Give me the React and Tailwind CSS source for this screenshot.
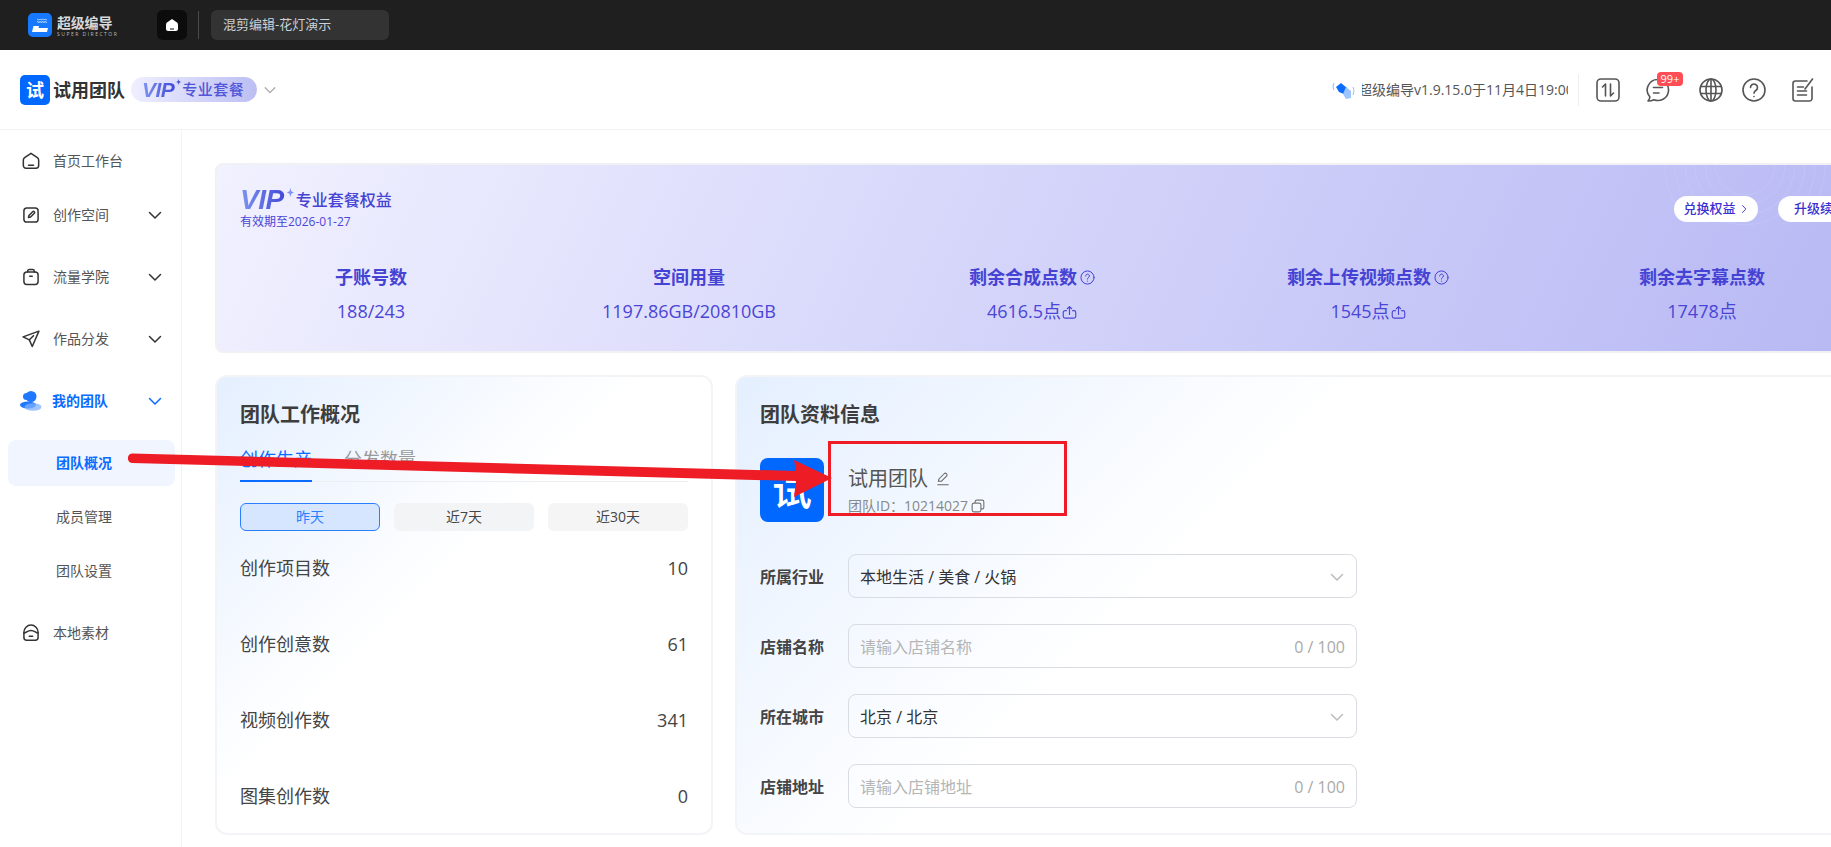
import React from "react";

const S = ({ size = 20, sw = 1.8, children, className = "" }) => (
  <svg width={size} height={size} viewBox="0 0 24 24" fill="none" stroke="currentColor" strokeWidth={sw} strokeLinecap="round" strokeLinejoin="round" className={className}>
    {children}
  </svg>
);

const Chevron = ({ className = "", size = 16 }) => (
  <svg width={size} height={size} viewBox="0 0 16 16" fill="none" stroke="currentColor" strokeWidth="1.5" strokeLinecap="round" strokeLinejoin="round" className={className}>
    <path d="M2.5 5.5 8 11l5.5-5.5" />
  </svg>
);

const HomeIcon = () => (
  <S size={20}>
    <path d="M12 2.8 19.6 8c1 .7 1.6 1.8 1.6 3v6.5a3.2 3.2 0 0 1-3.2 3.2H6a3.2 3.2 0 0 1-3.2-3.2V11c0-1.2.6-2.3 1.6-3Z" />
    <path d="M9 17h6" />
  </S>
);
const EditIcon = () => (
  <S size={20}>
    <rect x="3.5" y="3.5" width="17" height="17" rx="3.5" />
    <path d="m9 15 .5-2.5 4.5-4.5a1.4 1.4 0 0 1 2 2l-4.5 4.5Z" />
  </S>
);
const BagIcon = () => (
  <S size={20}>
    <rect x="3.5" y="6" width="17" height="15" rx="3.5" />
    <path d="M8 6V5a2 2 0 0 1 2-2h4a2 2 0 0 1 2 2v1" />
    <path d="M10.5 11h3" />
  </S>
);
const SendIcon = () => (
  <S size={20}>
    <path d="M21.5 2.5 2.5 9.5l7.5 3.5 3.5 8Z" />
    <path d="m10 13 5-5" />
  </S>
);
const TeamIcon = () => (
  <svg width="22" height="22" viewBox="0 0 22 22">
    <circle cx="11" cy="6.5" r="5.5" fill="#1f78ff" />
    <circle cx="6.5" cy="6.5" r="3.5" fill="#1f78ff" />
    <ellipse cx="8" cy="15" rx="8" ry="3.4" fill="#1f78ff" />
    <ellipse cx="13" cy="17" rx="8.5" ry="3.8" fill="#7fb0ff" opacity="0.75" />
  </svg>
);
const LocalIcon = () => (
  <S size={20}>
    <path d="M3.5 11a8.5 8.5 0 0 1 17 0v6.5a3.2 3.2 0 0 1-3.2 3.2H6.700a3.2 3.2 0 0 1-3.2-3.2Z" />
    <path d="M3.5 12c3 0 4-3 8.500-3s5.500 3 8.500 3" />
    <path d="M10 16h4" />
  </S>
);

const Row = ({ icon, label, chevron, active, className = "" }) => (
  <div className={`flex h-[46px] items-center pl-[21px] pr-[18px] ${className}`}>
    <span className={`flex w-[32px] shrink-0 ${active ? "" : "text-[#333]"}`}>{icon}</span>
    <span className={`flex-1 text-sm ${active ? "font-bold text-[#0a6cff]" : "text-[#555]"}`}>{label}</span>
    {chevron && <Chevron className={active ? "text-[#0a6cff]" : "text-[#333]"} />}
  </div>
);

const Sub = ({ label, active, className = "" }) => (
  <div className={`mx-2 flex h-[46px] w-[167px] items-center rounded-lg pl-[48px] text-sm ${active ? "bg-[#f0f5ff] font-bold text-[#0a6cff]" : "text-[#555]"} ${className}`}>
    {label}
  </div>
);

const Vip = ({ big }) => (
  <span className="flex items-start">
    <span className={`bg-[linear-gradient(90deg,#7f95f0,#3f46d8)] bg-clip-text pr-[2px] font-['Liberation_Sans',sans-serif] font-bold italic tracking-[-0.5px] text-transparent ${big ? "text-[28px] leading-[24px]" : "text-[21px] leading-[22px]"}`}>
      VIP
    </span>
    <svg width={big ? 9 : 6} height={big ? 9 : 6} viewBox="0 0 10 10" className="-ml-[1px]">
      <path d="M6 0 7 3.500 10 5 7 6.500 6 10 5 6.500 2 5 5 3.500Z" fill={big ? "#7f95f0" : "#4f56d8"} />
    </svg>
  </span>
);

const Stat = ({ label, help, value, upload, className = "" }) => (
  <div className={`flex shrink-0 flex-col items-center text-[#4a45d6] ${className}`}>
    <div className="flex h-[24px] items-center text-lg font-bold leading-[24px] text-[#4543d4]">
      {label}
      {help && (
        <svg width="15" height="15" viewBox="0 0 24 24" fill="none" stroke="currentColor" strokeWidth="1.6" strokeLinecap="round" className="ml-[3px]">
          <circle cx="12" cy="12" r="10.5" />
          <path d="M9 9.500a3 3 0 1 1 4.500 2.600c-1 .6-1.500 1.200-1.500 2.400" />
          <path d="M12 17.800v.1" />
        </svg>
      )}
    </div>
    <div className="mt-[10px] flex h-[24px] items-center text-lg leading-[24px]">
      {value}
      {upload && (
        <svg width="15" height="15" viewBox="0 0 24 24" fill="none" stroke="currentColor" strokeWidth="1.8" strokeLinecap="round" strokeLinejoin="round" className="ml-[1px] mt-[2px]">
          <path d="M7 9H5a3 3 0 0 0-3 3v6a3 3 0 0 0 3 3h14a3 3 0 0 0 3-3v-6a3 3 0 0 0-3-3h-2" />
          <path d="M12 15V3M8.500 6 12 2.500 15.500 6" />
        </svg>
      )}
    </div>
  </div>
);

const Metric = ({ label, value }) => (
  <div className="flex h-[24px] items-center justify-between text-lg text-[#444]">
    <span>{label}</span>
    <span>{value}</span>
  </div>
);

const Field = ({ label, children }) => (
  <div className="flex items-center">
    <span className="w-[88px] shrink-0 pt-[2px] text-base font-bold text-[#444]">{label}</span>
    <div className="flex h-[44px] w-[509px] items-center justify-between rounded-lg border border-[#d9dce1] px-[11px] pt-[2px] text-base">
      {children}
    </div>
  </div>
);

export default function App() {
  return (
    <div className="relative h-[847px] w-[1831px] overflow-hidden bg-white font-['Open_Sans','Noto_Sans_CJK_SC',sans-serif]">
      {/* window bar */}
      <div className="flex h-[50px] items-center bg-[#1f1f1f] pl-[28px]">
        <div className="flex h-[24px] w-[24px] items-center justify-center rounded-[5px] bg-[#1677ff]">
          <svg width="20" height="20" viewBox="0 0 20 20" fill="#fff">
            <path d="M2 17 3.500 11H9L8.500 13H18L17 17Z" />
            <path d="M7 7c1-1 1.500 1 2.500 0s1.500 1 2.500 0 1.500 1 2.500 0 1.500 1 2.500 0" fill="none" stroke="#fff" strokeWidth="1" />
            <path d="M7 4.500c1-1 1.500 1 2.500 0s1.500 1 2.500 0 1.500 1 2.500 0 1.500 1 2.500 0" fill="none" stroke="#fff" strokeWidth="1" opacity="0.7" />
          </svg>
        </div>
        <div className="ml-[5px] flex w-[100px] flex-col">
          <span className="text-sm font-bold leading-[17px] tracking-[-0.2px] text-[#d8d8d8]">超级编导</span>
          <span className="text-[5px] leading-[6px] tracking-[1.5px] text-[#bbb]">SUPER DIRECTOR</span>
        </div>
        <div className="flex h-[30px] w-[30px] items-center justify-center rounded-md bg-[#0c0c0c]">
          <svg width="14" height="14" viewBox="0 0 14 14" fill="#fff">
            <path d="M7 1 12 4.500c.7.500 1 1.300 1 2.200V11a2 2 0 0 1-2 2H3a2 2 0 0 1-2-2V6.700c0-.9.3-1.700 1-2.200Z" />
            <rect x="5" y="10.500" width="4" height="1" fill="#0c0c0c" />
          </svg>
        </div>
        <div className="ml-[11px] h-[28px] w-px bg-[#4a4a4a]" />
        <div className="ml-[12px] flex h-[30px] w-[178px] items-center rounded-md bg-[#333] pl-[12px] text-[13px] text-[#c9d1d9]">
          混剪编辑-花灯演示
        </div>
      </div>

      {/* header */}
      <div className="flex h-[80px] items-center border-b border-[#f2f2f2] pl-[20px] pr-[16px]">
        <div className="flex h-[30px] w-[30px] items-center justify-center rounded-[5px] bg-[#0068ff] text-lg font-bold text-white">试</div>
        <span className="ml-[3px] text-lg font-bold text-[#333]">试用团队</span>
        <div className="ml-[6px] flex h-[25px] w-[126px] items-center gap-[1px] rounded-full bg-[linear-gradient(90deg,#efefff,#bcbef3)] pl-[11px]">
          <Vip />
          <span className="text-[15px] font-medium tracking-[0.5px] text-[#4f56d8]">专业套餐</span>
        </div>
        <Chevron className="ml-[6px] text-[#aaa]" size={14} />
        <div className="flex-1" />
        <svg width="24" height="22" viewBox="0 0 24 22">
          <path d="M9 4 15 9 14 16 7 13 4 8Z" fill="#0a6cff" />
          <path d="M14 8 19 12 19 19 14 20 11 15Z" fill="#9cc4ff" />
          <path d="M2 4C1 6 1 9 2 11M21 8c1 2 1 6 0 8" stroke="#9cc4ff" strokeWidth="1.2" fill="none" />
        </svg>
        <div className="ml-[6px] w-[206px] overflow-hidden whitespace-nowrap text-sm text-[#555]">
          <span className="-ml-[4px] inline-block">超级编导v1.9.15.0于11月4日19:00</span>
        </div>
        <div className="ml-[10px] h-[32px] w-px bg-[#eeeeee]" />
        <div className="ml-[17px] flex items-center text-[#555]">
          <svg width="24" height="24" viewBox="0 0 24 24" fill="none" stroke="currentColor" strokeWidth="1.6" strokeLinecap="round" strokeLinejoin="round">
            <rect x="1" y="1" width="22" height="22" rx="4" />
            <path d="M6.500 9 9.500 6v12M17.500 15l-3 3V6" />
          </svg>
          <div className="relative ml-[26px]">
            <svg width="24" height="24" viewBox="0 0 24 24" fill="none" stroke="currentColor" strokeWidth="1.6" strokeLinecap="round" strokeLinejoin="round">
              <path d="M12 1.500a10.500 10.500 0 1 1-4 20.200c-1.500.8-3.500 1.300-6 1.300 1.200-1.300 1.800-2.600 1.900-4A10.500 10.500 0 0 1 12 1.500Z" />
              <path d="M7.500 9.500h9M7.500 15h5.500" />
            </svg>
            <span className="absolute -top-[6px] left-[11px] flex h-[14px] w-[26px] items-center justify-center rounded-[4px] bg-[#ff4d55] text-[11px] font-medium leading-none text-white">99+</span>
          </div>
          <svg width="24" height="24" viewBox="0 0 24 24" fill="none" stroke="currentColor" strokeWidth="1.6" className="ml-[29px]">
            <circle cx="12" cy="12" r="11" />
            <ellipse cx="12" cy="12" rx="5" ry="11" />
            <path d="M12 1v22M1.500 8.500h21M1.500 15.500h21" />
          </svg>
          <svg width="24" height="24" viewBox="0 0 24 24" fill="none" stroke="currentColor" strokeWidth="1.6" strokeLinecap="round" className="ml-[19px]">
            <circle cx="12" cy="12" r="11" />
            <path d="M8.500 9.500a3.500 3.500 0 1 1 5.300 3c-1.200.7-1.800 1.300-1.800 2.800" />
            <path d="M12 18.500v.1" />
          </svg>
          <svg width="24" height="24" viewBox="0 0 24 24" fill="none" stroke="currentColor" strokeWidth="1.6" strokeLinecap="round" strokeLinejoin="round" className="ml-[25px]">
            <path d="M16 3H4.500A2.500 2.500 0 0 0 2 5.500v15A2.500 2.500 0 0 0 4.500 23h14a2.500 2.500 0 0 0 2.500-2.500V9" />
            <path d="M21.500 1 14 11M6.500 9h6M6.500 13h9M6.500 17h9" />
          </svg>
        </div>
      </div>

      <div className="flex">
        {/* sidebar */}
        <aside className="h-[717px] w-[182px] shrink-0 border-r border-[#f3f3f3] pt-2">
          <Row icon={<HomeIcon />} label="首页工作台" />
          <Row icon={<EditIcon />} label="创作空间" chevron className="mt-2" />
          <Row icon={<BagIcon />} label="流量学院" chevron className="mt-4" />
          <Row icon={<SendIcon />} label="作品分发" chevron className="mt-4" />
          <Row icon={<TeamIcon />} label="我的团队" chevron active className="mt-4 !pl-[20px]" />
          <Sub label="团队概况" active className="mt-4" />
          <Sub label="成员管理" className="mt-2" />
          <Sub label="团队设置" className="mt-2" />
          <Row icon={<LocalIcon />} label="本地素材" className="mt-4" />
        </aside>

        {/* main */}
        <main className="min-w-0 flex-1 overflow-hidden pl-[33px] pt-[33px]">
          <div className="w-[1720px]">
            {/* banner */}
            <section className="relative h-[190px] overflow-hidden rounded-lg border-2 border-[#f1f1f5] bg-[linear-gradient(115deg,#f1f1ff,#d8d8fb_40%,#b5b6f3)] pl-[23px] pt-[24px]">
              <svg width="240" height="120" viewBox="0 0 240 120" fill="none" stroke="#fff" strokeOpacity="0.1" className="absolute left-[1408px] -top-[60px]">
                <circle cx="120" cy="60" r="30" />
                <circle cx="120" cy="60" r="40" />
                <circle cx="120" cy="60" r="50" />
                <circle cx="120" cy="60" r="60" />
                <circle cx="120" cy="60" r="70" />
                <circle cx="120" cy="60" r="80" />
              </svg>
              <div className="flex h-[54px] items-start justify-between">
                <div>
                  <div className="flex h-[22px] items-center gap-[2px]">
                    <Vip big />
                    <span className="text-base font-medium leading-[22px] text-[#4543d4]">专业套餐权益</span>
                  </div>
                  <div className="mt-[3px] text-xs leading-[16px] text-[#4a45d6]">有效期至2026-01-27</div>
                </div>
                <div className="relative mr-[71px] mt-[7px] flex gap-[20px]">
                  <div className="flex h-[26px] w-[84px] items-center justify-center gap-[3px] rounded-full bg-white text-[13px] font-medium text-[#3a2fd0]">
                    兑换权益
                    <Chevron size={10} className="-rotate-90" />
                  </div>
                  <div className="flex h-[26px] w-[84px] items-center justify-center gap-[3px] rounded-full bg-white text-[13px] font-medium text-[#3a2fd0]">
                    升级续费
                  </div>
                </div>
              </div>
              <div className="mt-[22px] flex pl-[95px]">
                <Stat label="子账号数" value="188/243" />
                <Stat label="空间用量" value="1197.86GB/20810GB" className="ml-[195px]" />
                <Stat label="剩余合成点数" help value="4616.5点" upload className="ml-[193px]" />
                <Stat label="剩余上传视频点数" help value="1545点" upload className="ml-[192px]" />
                <Stat label="剩余去字幕点数" value="17478点" className="ml-[190px]" />
              </div>
            </section>

            <div className="mt-[22px] flex gap-[22px]">
              {/* overview */}
              <section className="h-[460px] w-[498px] shrink-0 rounded-xl border-2 border-[#f3f4f7] bg-[linear-gradient(135deg,#e4efff,#ffffff_45%)] px-[23px] pt-[23px]">
                <h2 className="text-[20px] font-bold leading-[30px] text-[#3d3d3d]">团队工作概况</h2>
                <div className="mt-[14px] flex h-[38px] gap-[32px] border-b border-[#eceef1] pt-[2px] text-lg leading-[26px]">
                  <span className="h-[36px] border-b-2 border-[#0a6cff] text-[#0a6cff]">创作生产</span>
                  <span className="text-[#999]">分发数量</span>
                </div>
                <div className="mt-[21px] grid grid-cols-3 gap-[14px] text-sm">
                  <div className="flex h-[28px] items-center justify-center rounded-md border border-[#2a7fff] bg-[#d6e6ff] text-[#2a7fff]">昨天</div>
                  <div className="flex h-[28px] items-center justify-center rounded-md bg-[#f3f4f6] text-[#444]">近7天</div>
                  <div className="flex h-[28px] items-center justify-center rounded-md bg-[#f5f5f6] text-[#444]">近30天</div>
                </div>
                <div className="mt-[25px] flex flex-col gap-[52px]">
                  <Metric label="创作项目数" value="10" />
                  <Metric label="创作创意数" value="61" />
                  <Metric label="视频创作数" value="341" />
                  <Metric label="图集创作数" value="0" />
                </div>
              </section>

              {/* profile */}
              <section className="h-[460px] flex-1 rounded-xl border-2 border-[#f3f4f7] bg-[linear-gradient(135deg,#e4efff,#ffffff_38%)] px-[23px] pt-[23px]">
                <h2 className="text-[20px] font-bold leading-[30px] text-[#3d3d3d]">团队资料信息</h2>
                <div className="mt-[28px] flex items-center">
                  <div className="flex h-[64px] w-[64px] items-center justify-center rounded-lg bg-[#0068ff] text-[40px] font-medium text-white">试</div>
                  <div className="ml-[24px]">
                    <div className="flex items-center text-[20px] leading-[28px] text-[#555]">
                      试用团队
                      <svg width="14" height="14" viewBox="0 0 24 24" fill="none" stroke="#666" strokeWidth="1.8" strokeLinecap="round" strokeLinejoin="round" className="ml-[8px]">
                        <path d="m4 16 1-4L14 3a2.500 2.500 0 0 1 4 4l-9 9Z" />
                        <path d="M3 22h18" />
                      </svg>
                    </div>
                    <div className="mt-[3px] flex items-center text-sm leading-[20px] text-[#888]">
                      团队ID：10214027
                      <svg width="14" height="14" viewBox="0 0 24 24" fill="none" stroke="#777" strokeWidth="2" strokeLinejoin="round" className="ml-[3px]">
                        <rect x="2" y="7" width="15" height="15" rx="3" />
                        <path d="M7 7V5a3 3 0 0 1 3-3h9a3 3 0 0 1 3 3v9a3 3 0 0 1-3 3h-2" />
                      </svg>
                    </div>
                  </div>
                </div>
                <div className="mt-[32px] flex flex-col gap-[26px]">
                  <Field label="所属行业">
                    <span className="text-[#333]">本地生活 / 美食 / 火锅</span>
                    <Chevron className="text-[#bbb]" />
                  </Field>
                  <Field label="店铺名称">
                    <span className="text-[#b5b5b5]">请输入店铺名称</span>
                    <span className="text-[#aaa]">0 / 100</span>
                  </Field>
                  <Field label="所在城市">
                    <span className="text-[#333]">北京 / 北京</span>
                    <Chevron className="text-[#bbb]" />
                  </Field>
                  <Field label="店铺地址">
                    <span className="text-[#b5b5b5]">请输入店铺地址</span>
                    <span className="text-[#aaa]">0 / 100</span>
                  </Field>
                </div>
              </section>
            </div>
          </div>
        </main>
      </div>

      {/* annotation overlay */}
      <svg width="1831" height="847" viewBox="0 0 1831 847" className="pointer-events-none absolute left-0 top-0">
        <path d="M132 453.500 796 471 794 460 832 478 794 497 796 481 132 463a4.800 4.800 0 0 1 0-9.500Z" fill="#ee1c25" />
        <rect x="829.500" y="442.500" width="236" height="72" fill="none" stroke="#ee1c25" strokeWidth="3" />
      </svg>
    </div>
  );
}
